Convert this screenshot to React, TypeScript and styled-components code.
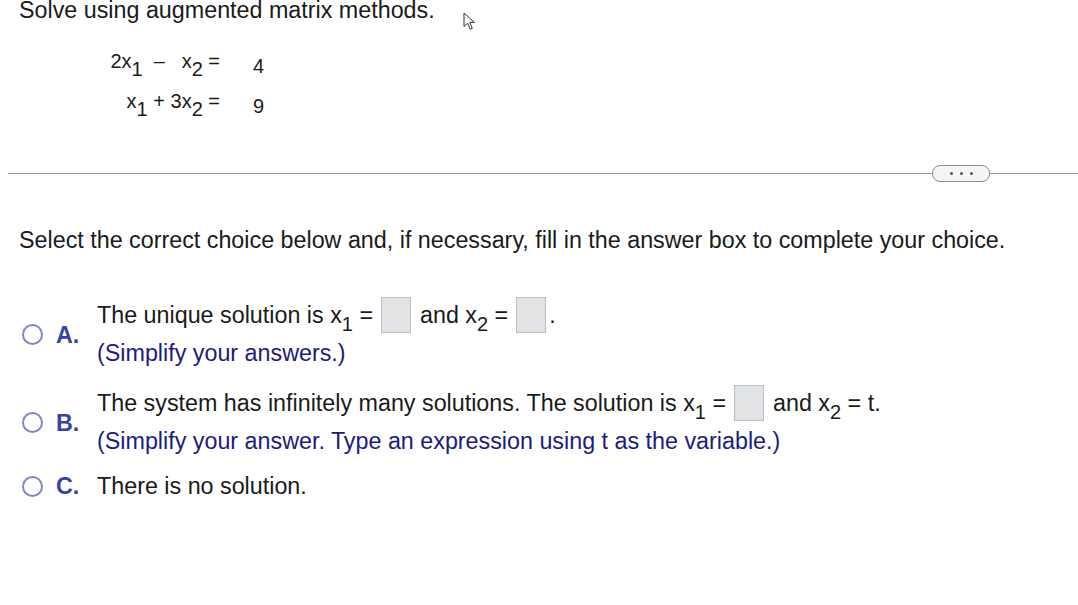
import React from "react";
import styled, { createGlobalStyle } from "styled-components";

const Global = createGlobalStyle`
  html, body { margin: 0; padding: 0; background: #fff; }
  body { font-family: "Liberation Sans", Arial, sans-serif; color: #1a1a1a; overflow: hidden; }
`;

const Page = styled.div`
  width: 1078px;
  height: 605px;
`;

const Title = styled.div`
  font-size: 23.3px;
  line-height: 24px;
  height: 24px;
  padding-left: 19px;
  margin-top: -2px;
  display: flex;
  align-items: flex-start;
  gap: 28px;
`;

const Cursor = styled.svg`
  margin-top: 14px;
  flex: none;
`;

const Equations = styled.div`
  display: grid;
  grid-template-columns: 112px auto;
  column-gap: 33px;
  row-gap: 7px;
  margin: 25px 0 0 108px;
  font-size: 20px;
  line-height: 28px;
`;

const Lhs = styled.div`
  text-align: right;
  white-space: pre;
  padding-bottom: 5px;
`;

const Rhs = styled.div`
  padding-top: 5px;
`;

const Sub = styled.sub`
  font-size: 20px;
  vertical-align: -8px;
  line-height: 0;
`;

const Divider = styled.div`
  display: flex;
  align-items: center;
  margin: 45px 0 0 8px;
`;

const Rule = styled.div<{ $grow?: boolean }>`
  height: 1px;
  background: #9a9a9a;
  flex: ${(p) => (p.$grow ? "1" : "0 0 88px")};
`;

const Pill = styled.div`
  width: 56px;
  height: 15px;
  border: 1px solid #8d8d8d;
  border-radius: 8px;
  background: #f4f5f7;
  display: flex;
  align-items: center;
  justify-content: center;
  gap: 7px;
`;

const Dot = styled.span`
  width: 3px;
  height: 3px;
  border-radius: 50%;
  background: #555;
`;

const Prompt = styled.div`
  font-size: 23.3px;
  line-height: 28px;
  margin: 44px 0 0 19px;
`;

const Choices = styled.div`
  margin-top: 42px;
  display: flex;
  flex-direction: column;
`;

const Choice = styled.div<{ $space?: number }>`
  display: grid;
  grid-template-columns: 97px 1fr;
  align-items: center;
  margin-top: ${(p) => p.$space ?? 0}px;
`;

const Marker = styled.div`
  display: flex;
  align-items: center;
  gap: 13px;
  padding-left: 22px;
`;

const Radio = styled.span`
  width: 17px;
  height: 17px;
  border: 2px solid #8088c6;
  border-radius: 50%;
  display: inline-block;
  flex: none;
`;

const Letter = styled.span`
  font-size: 23.3px;
  line-height: 24px;
  font-weight: bold;
  color: #3543a6;
`;

const Body = styled.div`
  display: flex;
  flex-direction: column;
`;

const Line = styled.div`
  font-size: 23.3px;
  line-height: 38px;
  white-space: pre;
`;

const Hint = styled.div`
  font-size: 23.3px;
  line-height: 39px;
  color: #1c1c7c;
`;

const Box = styled.span<{ $tail?: boolean }>`
  display: inline-block;
  box-sizing: border-box;
  width: 30px;
  height: 36px;
  border: 1px solid #b9bfc9;
  background: #e2e3e5;
  vertical-align: -10px;
  margin: 0 ${(p) => (p.$tail ? 3 : 9)}px 0 8px;
`;

const X = ({ n }: { n: number }) => (
  <span>
    x<Sub>{n}</Sub>
  </span>
);

export default function App() {
  return (
    <Page>
      <Global />
      <Title>
        <span>Solve using augmented matrix methods.</span>
        <Cursor width="14" height="19" viewBox="0 0 14 19">
          <path
            d="M1 1 L1 14.5 L4.6 11.2 L7.2 17.2 L9.3 16.2 L6.8 10.4 L11.4 10.4 Z"
            fill="#fff"
            stroke="#333"
            strokeWidth="1"
            strokeLinejoin="round"
          />
        </Cursor>
      </Title>
      <Equations>
        <Lhs>
          2<X n={1} />{"  –   "}<X n={2} /> =
        </Lhs>
        <Rhs>4</Rhs>
        <Lhs>
          <X n={1} /> + 3<X n={2} /> =
        </Lhs>
        <Rhs>9</Rhs>
      </Equations>
      <Divider>
        <Rule $grow />
        <Pill>
          <Dot />
          <Dot />
          <Dot />
        </Pill>
        <Rule />
      </Divider>
      <Prompt>
        Select the correct choice below and, if necessary, fill in the answer box to complete your choice.
      </Prompt>
      <Choices>
        <Choice>
          <Marker>
            <Radio />
            <Letter>A.</Letter>
          </Marker>
          <Body>
            <Line>
              The unique solution is <X n={1} /> =<Box />and <X n={2} /> =<Box $tail />.
            </Line>
            <Hint>(Simplify your answers.)</Hint>
          </Body>
        </Choice>
        <Choice $space={11}>
          <Marker>
            <Radio />
            <Letter>B.</Letter>
          </Marker>
          <Body>
            <Line>
              The system has infinitely many solutions. The solution is <X n={1} /> =<Box />and <X n={2} /> = t.
            </Line>
            <Hint>(Simplify your answer. Type an expression using t as the variable.)</Hint>
          </Body>
        </Choice>
        <Choice $space={6}>
          <Marker>
            <Radio />
            <Letter>C.</Letter>
          </Marker>
          <Body>
            <Line>There is no solution.</Line>
          </Body>
        </Choice>
      </Choices>
    </Page>
  );
}
